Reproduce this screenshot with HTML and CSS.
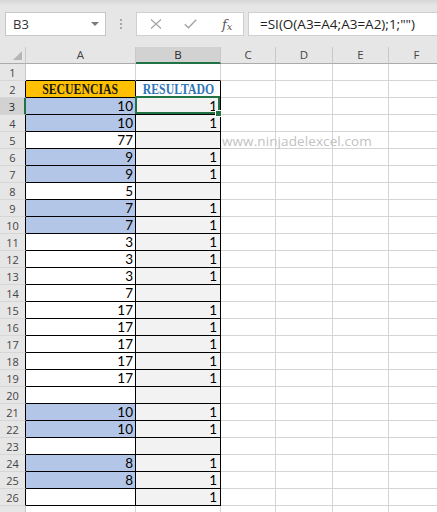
FILE: index.html
```html
<!DOCTYPE html>
<html lang="es">
<head>
<meta charset="utf-8">
<title>Excel</title>
<link rel="stylesheet" href="styles.css">
</head>
<body>
<div class="toolbar">
  <div class="namebox">
    <span class="nb-text">B3</span>
    <svg class="nb-arrow" width="8" height="4" viewBox="0 0 8 4"><path d="M0 0H8L4 4Z" fill="#7a7a7a"/></svg>
  </div>
  <div class="dots"><i></i><i></i><i></i></div>
  <div class="fxbox">
    <svg class="ico" width="12" height="10" viewBox="0 0 12 10"><path d="M1 0.5L11 9.5M11 0.5L1 9.5" stroke="#a3a3a3" stroke-width="1.2" fill="none"/></svg>
    <svg class="ico" width="13" height="10" viewBox="0 0 13 10"><path d="M0.8 5.2L4.5 8.8L12.2 0.8" stroke="#a3a3a3" stroke-width="1.4" fill="none"/></svg>
    <span class="fx">f<span class="fxx">x</span></span>
  </div>
  <div class="formula">=SI(O(A3=A4;A3=A2);1;"")</div>
</div>

<div class="sheet">
  <div class="corner"><svg width="9" height="9" viewBox="0 0 9 9"><path d="M9 0V9H0Z" fill="#b5b5b5"/></svg></div>
  <div class="ch">A</div>
  <div class="ch chsel">B</div>
  <div class="ch">C</div>
  <div class="ch">D</div>
  <div class="ch">E</div>
  <div class="ch">F</div>

  <div class="rh">1</div><div class="c top"></div><div class="c top"></div><div class="c"></div><div class="c"></div><div class="c"></div><div class="c"></div>
  <div class="rh blk">2</div><div class="c a hdr orange"><span class="sq">SECUENCIAS</span></div><div class="c b hdr blue-text"><span class="sq">RESULTADO</span></div><div class="c"></div><div class="c"></div><div class="c"></div><div class="c"></div>
  <div class="rh sel">3</div><div class="c a fill">10</div><div class="c b g active">1<span class="handle"></span></div><div class="c"></div><div class="c"></div><div class="c"></div><div class="c"></div>
  <div class="rh blk">4</div><div class="c a fill">10</div><div class="c b g">1</div><div class="c"></div><div class="c"></div><div class="c"></div><div class="c"></div>
  <div class="rh blk">5</div><div class="c a">77</div><div class="c b g"></div><div class="c"></div><div class="c"></div><div class="c"></div><div class="c"></div>
  <div class="rh blk">6</div><div class="c a fill">9</div><div class="c b g">1</div><div class="c"></div><div class="c"></div><div class="c"></div><div class="c"></div>
  <div class="rh blk">7</div><div class="c a fill">9</div><div class="c b g">1</div><div class="c"></div><div class="c"></div><div class="c"></div><div class="c"></div>
  <div class="rh blk">8</div><div class="c a">5</div><div class="c b g"></div><div class="c"></div><div class="c"></div><div class="c"></div><div class="c"></div>
  <div class="rh blk">9</div><div class="c a fill">7</div><div class="c b g">1</div><div class="c"></div><div class="c"></div><div class="c"></div><div class="c"></div>
  <div class="rh blk">10</div><div class="c a fill">7</div><div class="c b g">1</div><div class="c"></div><div class="c"></div><div class="c"></div><div class="c"></div>
  <div class="rh blk">11</div><div class="c a">3</div><div class="c b g">1</div><div class="c"></div><div class="c"></div><div class="c"></div><div class="c"></div>
  <div class="rh blk">12</div><div class="c a">3</div><div class="c b g">1</div><div class="c"></div><div class="c"></div><div class="c"></div><div class="c"></div>
  <div class="rh blk">13</div><div class="c a">3</div><div class="c b g">1</div><div class="c"></div><div class="c"></div><div class="c"></div><div class="c"></div>
  <div class="rh blk">14</div><div class="c a">7</div><div class="c b g"></div><div class="c"></div><div class="c"></div><div class="c"></div><div class="c"></div>
  <div class="rh blk">15</div><div class="c a">17</div><div class="c b g">1</div><div class="c"></div><div class="c"></div><div class="c"></div><div class="c"></div>
  <div class="rh blk">16</div><div class="c a">17</div><div class="c b g">1</div><div class="c"></div><div class="c"></div><div class="c"></div><div class="c"></div>
  <div class="rh blk">17</div><div class="c a">17</div><div class="c b g">1</div><div class="c"></div><div class="c"></div><div class="c"></div><div class="c"></div>
  <div class="rh blk">18</div><div class="c a">17</div><div class="c b g">1</div><div class="c"></div><div class="c"></div><div class="c"></div><div class="c"></div>
  <div class="rh blk">19</div><div class="c a">17</div><div class="c b g">1</div><div class="c"></div><div class="c"></div><div class="c"></div><div class="c"></div>
  <div class="rh blk">20</div><div class="c a"></div><div class="c b g"></div><div class="c"></div><div class="c"></div><div class="c"></div><div class="c"></div>
  <div class="rh blk">21</div><div class="c a fill">10</div><div class="c b g">1</div><div class="c"></div><div class="c"></div><div class="c"></div><div class="c"></div>
  <div class="rh blk">22</div><div class="c a fill">10</div><div class="c b g">1</div><div class="c"></div><div class="c"></div><div class="c"></div><div class="c"></div>
  <div class="rh blk">23</div><div class="c a"></div><div class="c b g"></div><div class="c"></div><div class="c"></div><div class="c"></div><div class="c"></div>
  <div class="rh blk">24</div><div class="c a fill">8</div><div class="c b g">1</div><div class="c"></div><div class="c"></div><div class="c"></div><div class="c"></div>
  <div class="rh blk">25</div><div class="c a fill">8</div><div class="c b g">1</div><div class="c"></div><div class="c"></div><div class="c"></div><div class="c"></div>
  <div class="rh blk">26</div><div class="c a"></div><div class="c b g">1</div><div class="c"></div><div class="c"></div><div class="c"></div><div class="c"></div>
  <div class="rh"></div><div class="c"></div><div class="c"></div><div class="c"></div><div class="c"></div><div class="c"></div><div class="c"></div>

  <div class="watermark">www.ninjadelexcel.com</div>
</div>
</body>
</html>
```

FILE: styles.css
```css
html, body {
  margin: 0;
  padding: 0;
  background: #ffffff;
  overflow: hidden;
  width: 437px;
  height: 512px;
}

body {
  font-family: "Open Sans", "Noto Sans", sans-serif;
}

.toolbar {
  height: 47px;
  box-sizing: border-box;
  background: linear-gradient(#d7d7d7 0px, #e6e6e6 6px, #e6e6e6 100%);
  display: flex;
  align-items: flex-start;
  padding-top: 12px;
  padding-left: 5px;
  white-space: nowrap;
}

.namebox {
  width: 101px;
  height: 24px;
  box-sizing: border-box;
  background: #ffffff;
  border: 1px solid #c6c6c6;
  display: flex;
  align-items: center;
  padding-left: 7px;
  padding-right: 6px;
}

.nb-text {
  flex: 1;
  font-size: 13px;
  color: #333333;
}

.nb-arrow {
  display: block;
}

.dots {
  width: 3px;
  margin: 7px 13px 0 14px;
  display: flex;
  flex-direction: column;
  gap: 2px;
}

.dots i {
  display: block;
  width: 2px;
  height: 2px;
  background: #a8a8a8;
}

.fxbox {
  width: 108px;
  height: 24px;
  box-sizing: border-box;
  background: #ffffff;
  border: 1px solid #cfcfcf;
  display: flex;
  align-items: center;
  padding-left: 13px;
}

.ico {
  display: block;
  margin-right: 22px;
}

.ico + .ico {
  margin-right: 25px;
}

.fx {
  font-family: "DejaVu Serif", "Liberation Serif", serif;
  font-style: italic;
  font-size: 13px;
  color: #5a5a5a;
  line-height: 1;
}

.fxx {
  font-size: 10px;
  position: relative;
  top: 1px;
}

.formula {
  flex: 1;
  margin-left: 4px;
  height: 24px;
  box-sizing: border-box;
  background: #ffffff;
  border: 1px solid #cfcfcf;
  border-right: none;
  padding-left: 11px;
  font-size: 13.5px;
  line-height: 22px;
  color: #222222;
}

.sheet {
  position: relative;
  display: grid;
  grid-template-columns: 26px 110px 85px 55px 57px 56px 56px;
  grid-auto-rows: 17px;
  width: 445px;
}

.sheet > div {
  box-sizing: border-box;
}

.corner {
  background: #e6e6e6;
  border-right: 1px solid #c8c8c8;
  border-bottom: 1px solid #ababab;
  display: flex;
  align-items: flex-end;
  justify-content: flex-end;
  padding: 0 3px 3px 0;
}

.corner svg {
  display: block;
}

.ch {
  background: #e6e6e6;
  border-right: 1px solid #c8c8c8;
  border-bottom: 1px solid #ababab;
  text-align: center;
  font-size: 11.5px;
  line-height: 16px;
  color: #444444;
}

.ch.chsel {
  background: #d2d2d2;
  border-bottom: 2px solid #217346;
  color: #262626;
}

.rh {
  background: #e6e6e6;
  border-right: 1px solid #c8c8c8;
  border-bottom: 1px solid #d6d6d6;
  text-align: center;
  font-size: 11px;
  line-height: 17px;
  color: #444444;
}

.rh.blk {
  border-right-color: #000000;
}

.rh.sel {
  background: #d2d2d2;
  border-right: 2px solid #217346;
  color: #262626;
}

.c {
  border-right: 1px solid #d4d4d4;
  border-bottom: 1px solid #d4d4d4;
  font-family: "Lato", "Noto Sans", sans-serif;
  font-size: 13.5px;
  line-height: 17px;
  color: #000000;
  text-align: right;
  padding-right: 2px;
  overflow: hidden;
  white-space: nowrap;
}

.c.top {
  border-bottom-color: #000000;
}

.c.a {
  border-right-color: #000000;
  border-bottom-color: #000000;
}

.c.b {
  border-right-color: #000000;
  border-bottom-color: #000000;
  padding-right: 3px;
}

.c.g {
  background: #f2f2f2;
}

.c.fill {
  background: #b4c6e7;
}

.c.hdr {
  font-family: "Liberation Serif", "DejaVu Serif", serif;
  font-weight: bold;
  font-size: 14px;
  text-align: center;
  padding-right: 0;
  line-height: 17px;
}

.sq {
  display: inline-block;
  transform: scaleX(0.84);
}

.c.orange {
  background: #ffc000;
  color: #1a1a1a;
}

.c.blue-text {
  color: #2e75b6;
}

.c.active {
  position: relative;
  overflow: visible;
}

.c.active::after {
  content: "";
  position: absolute;
  left: -1px;
  top: -2px;
  right: 0;
  bottom: 0;
  border: 2px solid #217346;
}

.handle {
  position: absolute;
  right: -2px;
  bottom: -3px;
  width: 5px;
  height: 5px;
  background: #217346;
  border: 1px solid #ffffff;
  z-index: 2;
}

.watermark {
  position: absolute;
  left: 222px;
  top: 86px;
  font-family: "Open Sans", "Noto Sans", sans-serif;
  font-size: 13.5px;
  line-height: 17px;
  color: #c2c2c2;
  letter-spacing: 0.1px;
  white-space: nowrap;
}
```
